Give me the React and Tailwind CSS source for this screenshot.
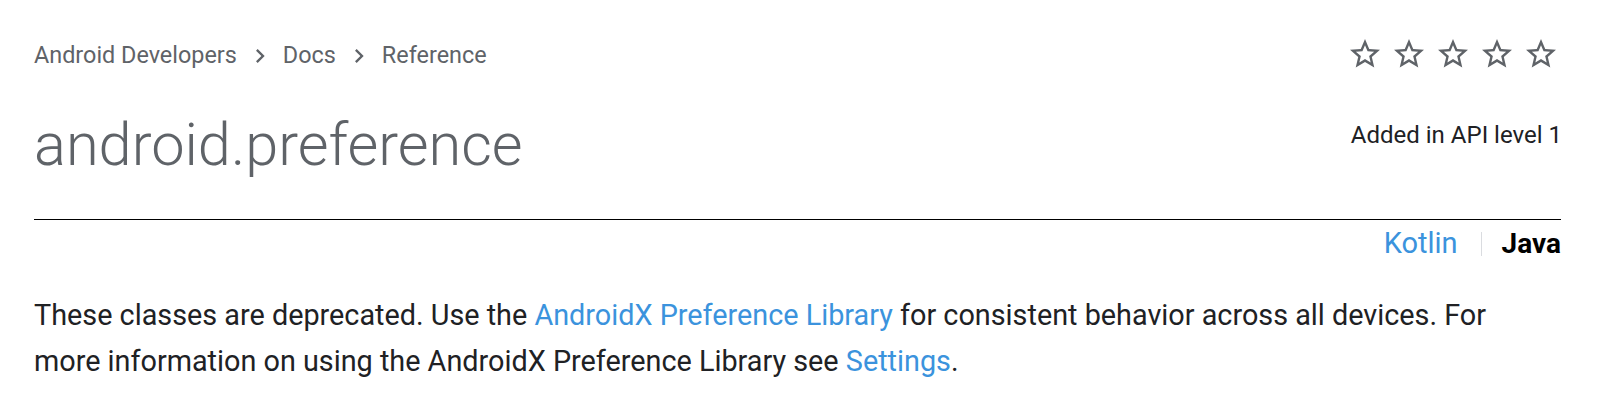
function Star() {
  return (
    <svg viewBox="0 0 24 24" className="w-[36px] h-[36px] fill-[#5f6368]">
      <path d="M22 9.24l-7.19-.62L12 2 9.19 8.63 2 9.24l5.46 4.73L5.82 21 12 17.27 18.18 21l-1.63-7.03L22 9.24zM12 15.4l-3.76 2.27 1-4.28-3.32-2.88 4.38-.38L12 6.1l1.71 4.04 4.38.38-3.32 2.88 1 4.28L12 15.4z" />
    </svg>
  )
}

function Chevron() {
  return (
    <svg viewBox="0 0 24 24" className="w-[28px] h-[28px] mx-[9px] fill-[#5f6368]">
      <path d="M10 6L8.59 7.41 13.17 12l-4.58 4.59L10 18l6-6z" />
    </svg>
  )
}

export default function App() {
  return (
    <div className="min-h-[416px] bg-white pl-[34px] pr-[39px] pt-[38px] font-['Roboto',sans-serif] text-[#202124]">
      <div className="flex justify-between items-start">
        <nav className="flex items-center h-[36px] text-[23.4px] text-[#5f6368]">
          <span>Android Developers</span>
          <Chevron />
          <span>Docs</span>
          <Chevron />
          <span>Reference</span>
        </nav>
        <div className="flex gap-[8px] mr-[2px] -mt-[2px]">
          <Star />
          <Star />
          <Star />
          <Star />
          <Star />
        </div>
      </div>

      <div className="flex justify-between items-start mt-[37px]">
        <h1 className="text-[59.5px] leading-[68px] font-light text-[#5f6368]">android.preference</h1>
        <div className="text-[24px] leading-[32px] mt-[8px] -mr-[1px]">Added in API level 1</div>
      </div>

      <hr className="mt-[40px] border-t border-black" />

      <div className="flex justify-end items-center h-[48px]">
        <a className="text-[29px] text-[#3b93dd]">Kotlin</a>
        <span className="w-px h-[24px] bg-[#dadce0] ml-[23px] mr-[20px]" />
        <span className="text-[28px] font-bold text-black">Java</span>
      </div>

      <p className="mt-[24px] max-w-[1500px] text-[28.8px] leading-[46px]">
        These classes are deprecated. Use the <a className="text-[#3b93dd]">AndroidX Preference Library</a> for consistent behavior across all devices. For more information on using the AndroidX Preference Library see <a className="text-[#3b93dd]">Settings</a>.
      </p>
    </div>
  )
}
